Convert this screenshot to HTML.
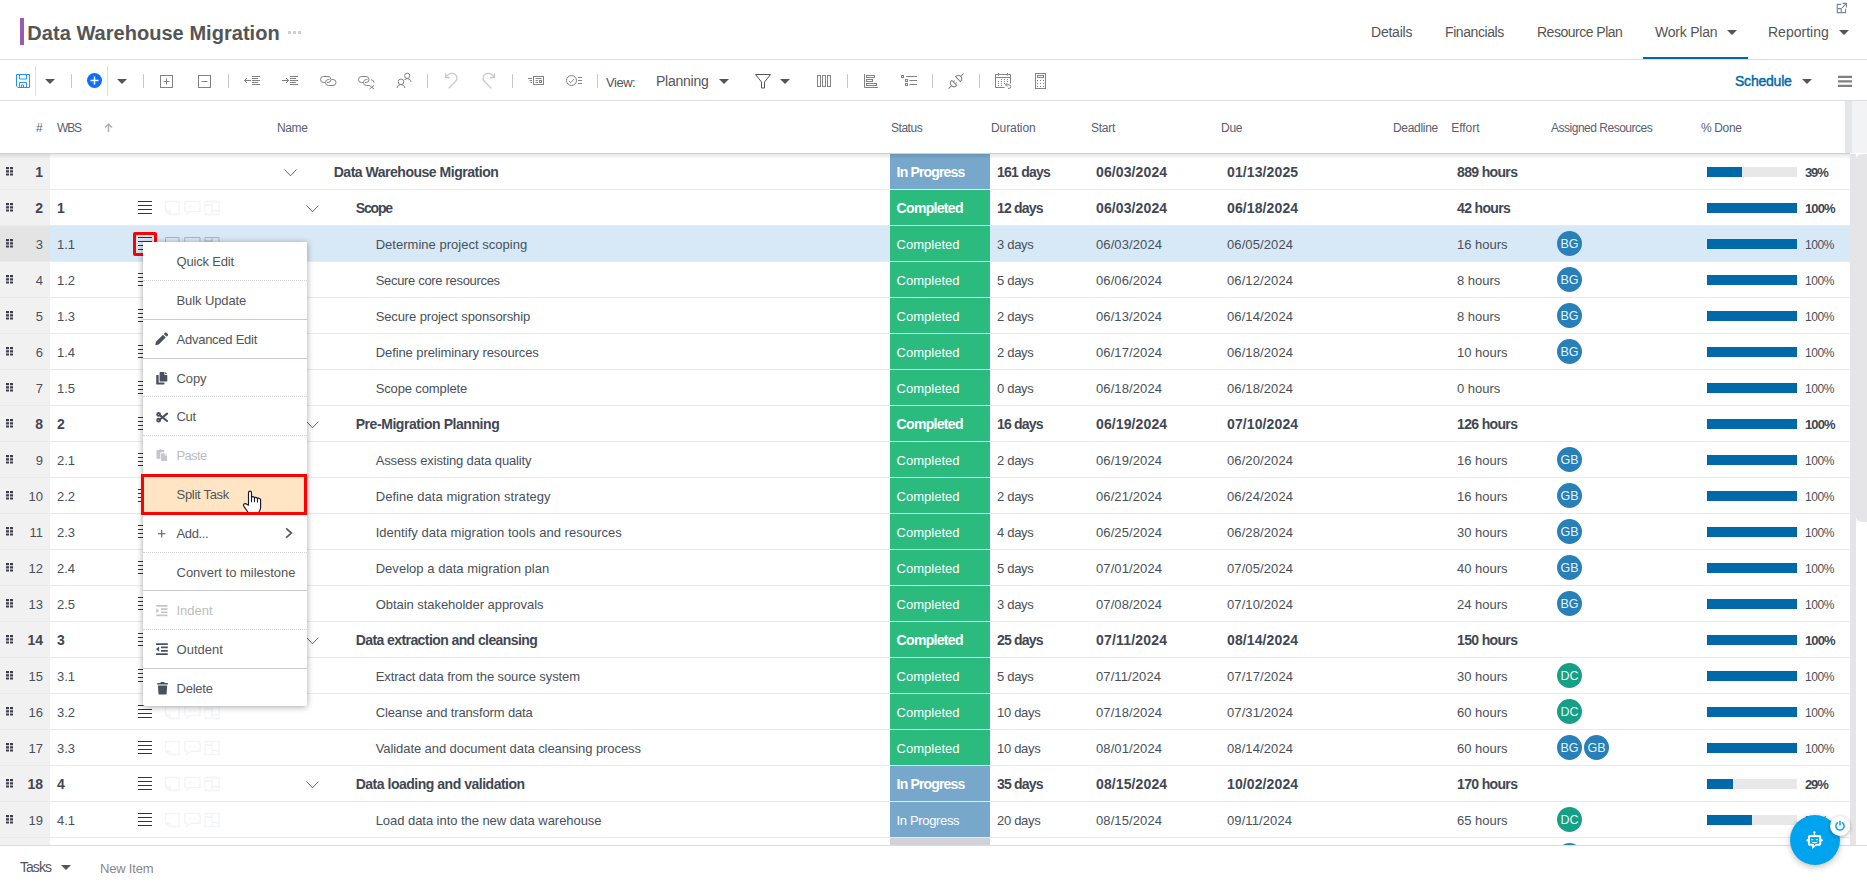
<!DOCTYPE html>
<html><head><meta charset="utf-8"><title>Data Warehouse Migration</title>
<style>
*{box-sizing:border-box;margin:0;padding:0}
html,body{width:1867px;height:892px;overflow:hidden;background:#fff;font-family:"Liberation Sans",sans-serif;color:#444}
body{position:relative}
.abs{position:absolute}
svg{position:absolute;overflow:visible}
/* header */
#pbar{position:absolute;left:20px;top:18px;width:4px;height:27px;background:#9b59b6}
#title{position:absolute;left:27.300px;top:20px;font-size:20px;font-weight:bold;color:#555;line-height:26px;white-space:nowrap}
#dots{position:absolute;left:288px;top:31px;width:13px;height:3px;background:linear-gradient(90deg,#cfcfcf 0,#cfcfcf 3px,#fff 3px,#fff 5px,#cfcfcf 5px,#cfcfcf 8px,#fff 8px,#fff 10px,#cfcfcf 10px,#cfcfcf 13px)}
.tab{position:absolute;top:23px;font-size:14px;line-height:18px;color:#555;white-space:nowrap}
.arr{position:absolute;width:0;height:0;border-left:5px solid transparent;border-right:5px solid transparent;border-top:5.500px solid #555}
#uline{position:absolute;left:1643px;top:56.600px;width:105px;height:2.400px;background:#0067a8}
.hl{position:absolute;left:0;width:1867px;height:1px;background:#dddde2}
/* toolbar */
.vs{position:absolute;top:66px;width:1px;height:30px;background:#dedede}
.ss{position:absolute;top:74px;width:1px;height:14px;background:#c8c8c8}
.tb{stroke:#838383;fill:none;stroke-width:1}
.tl{position:absolute;font-size:14px;line-height:18px;color:#555;white-space:nowrap}
/* grid header */
.gh{position:absolute;top:121px;font-size:12px;line-height:14px;color:#596070;white-space:nowrap}
/* rows */
.row{position:absolute;left:0;width:1850px;height:36px;border-bottom:1px solid #e8eaec;background:#fff}
.row .lc{position:absolute;left:0;top:0;width:50px;height:35px;background:#f1f1f1}
.row.sel{background:#d7e8f6}
.row.sel .lc{background:#e4e4e4}
.row .t{position:absolute;top:11px;font-size:13px;line-height:16px;white-space:nowrap;color:#49505a}
.row.b .t{font-weight:bold;color:#414753;font-size:14px;top:10px}
.num{position:absolute;right:1807px;top:11px;font-size:13px;line-height:16px;color:#49505a}
.wbs{position:absolute;left:57px;top:11px;font-size:13px;line-height:16px;color:#49505a}
.row.b .num,.row.b .wbs{font-weight:bold;color:#414753;font-size:14px;top:10px}
.drag{left:6px;top:13px;width:7px;height:9px;fill:#3a3f4a}
.ham{left:138px;top:10px;width:14px;height:14px;stroke:#333;stroke-width:1;fill:none}
.ghost{left:165px;top:11px;width:56px;height:15px;stroke:#f2f4f7;stroke-width:1.300;fill:none}
.row.sel .ghost{stroke:#b0b3b8;stroke-width:1}
.chev{top:15px;width:13px;height:7.500px;stroke:#666;stroke-width:1;fill:none}
.st{position:absolute;left:890px;top:0;width:100px;height:35px;color:#fff;font-size:13px;line-height:16px;padding:11px 0 0 6.600px;white-space:nowrap}
.st.c{background:#2cbb7e}
.st.p{background:#77a7ca;letter-spacing:-.35px}
.row.b .st{font-weight:bold;font-size:14px;padding-top:10px}
.av{position:absolute;top:5px;width:25px;height:25px;border-radius:50%;background:#2980b9;color:rgba(255,255,255,.93);font-size:12.500px;line-height:27.500px;text-align:center}
.av.g{background:#16a085}
.bar{position:absolute;left:1707px;top:13px;width:90px;height:10px;background:#e8e8e8}
.bar i{display:block;height:10px;background:#0069aa}
.row .t.pct{left:1805px;font-size:12px;letter-spacing:-.4px}.row.b .t.pct{font-size:13px;top:11px}

#menu{position:absolute;left:143px;top:242px;width:164px;height:463.500px;background:#fff;box-shadow:0 1px 6px rgba(0,0,0,.35);border-radius:0 0 2px 2px;z-index:10}
#menu .mt{position:absolute;left:33.500px;font-size:13px;line-height:16px;color:#555;white-space:nowrap}
#menu .mt.dis{color:#bdbdbd}
#menu .mic{fill:#4a5060}
#menu .mic.dis{fill:#c4c6cc}
#menu .sep{position:absolute;left:0;width:164px;height:0;border-top:1px solid #c9cad6}
#menu .sep.d{border-top:1px dotted #d4d4d4}
.row .dt{letter-spacing:.1px}.row .du{letter-spacing:-.3px}
/* bottom */
#bottom{position:absolute;left:0;top:845px;width:1867px;height:47px;background:#fff;border-top:1px solid #dcdcdc}
</style></head><body>
<!-- title -->
<div id="pbar"></div>
<div id="title" style="letter-spacing:0.037px;">Data Warehouse Migration</div>
<div id="dots"></div>
<!-- tabs -->
<span class="tab" style="letter-spacing:-0.228px;left:1371px">Details</span>
<span class="tab" style="letter-spacing:-0.413px;left:1445px">Financials</span>
<span class="tab" style="letter-spacing:-0.494px;left:1537px">Resource Plan</span>
<span class="tab" style="letter-spacing:-0.214px;left:1655px">Work Plan</span><i class="arr" style="left:1726.800px;top:29.700px"></i>
<span class="tab" style="letter-spacing:-0.000px;left:1768px">Reporting</span><i class="arr" style="left:1838.500px;top:29.700px"></i>
<div id="uline"></div>
<div class="hl" style="top:59px"></div>
<div class="hl" style="top:100px"></div>
<!-- toolbar -->
<svg style="left:0;top:60px;width:1867px;height:40px" viewBox="0 60 1867 40">
<!-- save -->
<g fill="none" stroke="#2196f3" stroke-width="1">
<path d="M16.5 74.5h13v13h-11.5l-1.5-1.5z"/>
<path d="M19.5 74.5v4.5h7v-4.5"/>
<path d="M19.5 87.5v-5h7v5M21.5 87.5v-2.5h2v2.5"/>
</g>
<!-- plus circle -->
<circle cx="94.5" cy="80.5" r="7.5" fill="#0d6efd"/>
<path d="M90.5 80.5h8M94.5 76.5v8" stroke="#fff" stroke-width="1.5" fill="none"/>
<g class="tb">
<!-- expand / collapse boxes -->
<rect x="160.5" y="75.5" width="12" height="12"/><path d="M163.5 81.5h6M166.5 78.5v6"/>
<rect x="198.5" y="75.5" width="12" height="12"/><path d="M201.5 81.5h6"/>
<!-- outdent -->
<path d="M252 76.5h8M252 78.5h6M252 80.5h8M252 82.5h6M252 84.5h8M244.5 80.5h6.5M247 78l-2.5 2.5l2.5 2.5"/>
<!-- indent -->
<path d="M290 76.5h8M290 78.5h6M290 80.5h8M290 82.5h6M290 84.5h8M282 80.5h6.5M286 78l2.5 2.5l-2.5 2.5"/>
<!-- link -->
<path d="M325 82.500H323.500A3 3 0 0 1 323.500 76.500H328A3 3 0 0 1 328 82.500H327"/>
<path d="M331.500 79.500H333A3 3 0 0 1 333 85.500H328.500A3 3 0 0 1 328.500 79.500H329.500"/>
<!-- unlink -->
<path d="M363 82.500H361.500A3 3 0 0 1 361.500 76.500H366A3 3 0 0 1 366 82.500H365"/>
<path d="M369.5 85.5h-3a3 3 0 0 1 0-6h1M371 79.8a3 3 0 0 1 3 2.7M369.5 85.5l4.5 3.5M374 85.5l-4.5 3.5"/>
<!-- people -->
<circle cx="407.2" cy="75.8" r="2.6"/><path d="M404.5 79.5q2.8-1.8 5.4 0q1 1 1.2 2.5"/>
<circle cx="401" cy="81.8" r="2.8"/><path d="M397 88q0.5-3.5 4-3.5t4 3.5"/>
<!-- task card icon -->
<path d="M528 78.5h4M529.5 80.5h2.5M530.5 82.5h1.5"/>
<rect x="533.5" y="76.5" width="10" height="8"/>
<path d="M535.5 78.5h6M535.5 80.5h2.5M535.5 82.5h2.5"/><rect x="539.5" y="80.5" width="2" height="2"/>
<!-- check circle list -->
<circle cx="571.5" cy="80.5" r="5"/><path d="M569 80.8l1.8 1.8l3.4-3.6M578 77.5h4M578 80.5h4M578 83.5h4"/>
<!-- filter -->
<path d="M755.5 74.5h15l-6 7.5v6h-3v-6z" stroke="#555"/>
<!-- columns -->
<rect x="817.5" y="75.5" width="3" height="11"/><rect x="822.5" y="75.5" width="3" height="11"/><rect x="827.5" y="75.5" width="3" height="11"/>
<!-- gantt -->
<path d="M864.5 74v13.5h13.500"/><rect x="866.5" y="75.500" width="8" height="2"/><rect x="866.5" y="79.500" width="6" height="2"/><rect x="866.5" y="83.500" width="10" height="2"/>
<!-- tree list -->
<rect x="901.5" y="75.5" width="2" height="2"/><path d="M906 76.500h11M909.500 80.500h7.500M909.500 84.500h7.500"/><rect x="905.5" y="79.500" width="2" height="2"/><rect x="905.5" y="83.500" width="2" height="2"/>
<!-- plug -->
<g transform="translate(956 80.500) rotate(-45)"><path d="M-11 .5H-6.800M6.200 .4H10.500"/><path d="M-2.900 -3H-3.300A3.500 3.500 0 0 0 -3.300 4H-2.900Z"/><path d="M-2.900 -.9H-.9M-2.900 1.900H-.9"/><path d="M2.400 -3H2.800A3.400 3.400 0 0 1 2.800 3.800H2.400Z"/></g>
<!-- calendar -->
<path d="M1004.500 87.500H995.500V74.500H1010.500V83.500M995.500 77.500H1010.500M998.500 73V75.500M1007.500 73V75.500"/>
<path d="M1001 79.500h1M1004 79.500h1M1007 79.500h1M998 81.500h1M1001 81.500h1M1004 81.500h1M1007 81.500h1M998 83.500h1M1001 83.500h1M1004 83.500h1M998 85.500h1M1001 85.500h1"/>
<path d="M1005.500 84.800H1009A1.800 1.800 0 0 1 1009 88.400H1008M1007.300 83l-1.800 1.800l1.800 1.800"/>
<!-- calculator -->
<rect x="1035.500" y="73.500" width="10" height="15"/><rect x="1037.500" y="75.500" width="6" height="2"/>
<path d="M1037 80.500h1M1040 80.500h1M1043 80.500h1M1037 83.500h1M1040 83.500h1M1043 83.500h1M1037 86.500h1M1040 86.500h1M1043 86.500h1"/>
</g>
<!-- undo/redo (disabled) -->
<g fill="none" stroke="#c9c9c9" stroke-width="1.300">
<path d="M445.500 73.300v4.200h4.300M445.500 77.500q2.500-4.500 7-4.200q4.500 1 4.500 5q-0.500 2.500-2.500 4.200l-5.800 5.800"/>
<path d="M494.500 73.300v4.200h-4.300M494.500 77.500q-2.500-4.500-7-4.200q-4.500 1-4.500 5q0.500 2.500 2.500 4.200l5.800 5.800"/>
</g>
<!-- hamburger right -->
<path d="M1838 76.900h14M1838 81.300h14M1838 85.800h14" stroke="#808080" stroke-width="2.200" fill="none"/>
</svg>
<i class="vs" style="left:35px"></i><i class="vs" style="left:107px"></i>
<i class="ss" style="left:71px"></i><i class="ss" style="left:143px"></i><i class="ss" style="left:228px"></i><i class="ss" style="left:427px"></i><i class="ss" style="left:512px"></i><i class="ss" style="left:597px"></i><i class="ss" style="left:847px"></i><i class="ss" style="left:932px"></i><i class="ss" style="left:979px"></i>
<i class="arr" style="left:44.800px;top:79px"></i>
<i class="arr" style="left:116.700px;top:79px"></i>
<i class="arr" style="left:719.300px;top:79px"></i>
<i class="arr" style="left:780.400px;top:79px"></i>
<i class="arr" style="left:1801.600px;top:79px"></i>
<span class="tl" style="letter-spacing:-0.473px;left:606px;top:74px;font-size:13px">View:</span>
<span class="tl" style="letter-spacing:-0.250px;left:656px;top:72px">Planning</span>
<span class="tl" style="letter-spacing:-0.224px;left:1735px;top:72px;color:#0067a8;-webkit-text-stroke:0.400px #0067a8;font-size:14px">Schedule</span>

<!-- grid header -->
<div class="abs" style="left:0;top:101px;width:1845px;height:52px;background:#fff"></div>
<div class="abs" style="left:1845px;top:101px;width:7px;height:52px;background:#e5e6e8"></div>
<div class="abs" style="left:1852px;top:101px;width:15px;height:52px;background:#f2f3f5"></div>
<span class="gh" style="left:36px">#</span>
<span class="gh" style="letter-spacing:-1.181px;left:57px">WBS</span>
<svg style="left:104px;top:123px;width:9px;height:9px" viewBox="0 0 9 9"><path d="M4.500 9v-8M1 4.500l3.500-3.500l3.500 3.500" fill="none" stroke="#b0b0b0" stroke-width="1.500"/></svg>
<span class="gh" style="letter-spacing:-0.379px;left:277px">Name</span>
<span class="gh" style="letter-spacing:-0.472px;left:891px">Status</span>
<span class="gh" style="letter-spacing:-0.095px;left:991px">Duration</span>
<span class="gh" style="letter-spacing:-0.269px;left:1091px">Start</span>
<span class="gh" style="letter-spacing:-0.272px;left:1221px">Due</span>
<span class="gh" style="letter-spacing:-0.309px;left:1393px">Deadline</span>
<span class="gh" style="letter-spacing:-0.045px;left:1451.300px">Effort</span>
<span class="gh" style="letter-spacing:-0.492px;left:1551px">Assigned Resources</span>
<span class="gh" style="letter-spacing:-0.367px;left:1701px">% Done</span>
<div class="abs" style="left:0;top:153px;width:1850px;height:1px;background:#cfcfcf;z-index:3"></div>
<div class="abs" style="left:0;top:154px;width:1850px;height:5px;background:linear-gradient(rgba(0,0,0,.10),rgba(0,0,0,0));z-index:3"></div>

<div id="grid">
<div class="row b" style="top:154px"><div class="lc"></div><svg class="drag" viewBox="0 0 7 9"><path d="M0 0h3v2.200H0zM4 0h3v2.200H4zM0 3.200h3v2.200H0zM4 3.200h3v2.200H4zM0 6.400h3v2.200H0zM4 6.400h3v2.200H4z"/></svg><span class="num">1</span><svg class="chev" style="left:284px" viewBox="0 0 13 7.500"><path d="M0.500 0.500l6 6.300l6-6.300"/></svg><span class="t name" style="letter-spacing:-0.478px;left:333.7px">Data Warehouse Migration</span><div class="st p"><span style="letter-spacing:-0.831px;display:inline-block">In Progress</span></div><span class="t du" style="letter-spacing:-0.758px;left:997px">161 days</span><span class="t dt" style="letter-spacing:0.112px;left:1096px">06/03/2024</span><span class="t dt" style="letter-spacing:0.112px;left:1227px">01/13/2025</span><span class="t" style="letter-spacing:-0.649px;left:1457px">889 hours</span><div class="bar"><i style="width:35px"></i></div><span class="t pct" style="letter-spacing:-1.143px;">39%</span></div>
<div class="row b" style="top:190px"><div class="lc"></div><svg class="drag" viewBox="0 0 7 9"><path d="M0 0h3v2.200H0zM4 0h3v2.200H4zM0 3.200h3v2.200H0zM4 3.200h3v2.200H4zM0 6.400h3v2.200H0zM4 6.400h3v2.200H4z"/></svg><span class="num">2</span><span class="wbs">1</span><svg class="ham" viewBox="0 0 14 14"><path d="M0 1.5h14M0 5.5h14M0 9.5h14M0 13.5h14"/></svg><svg class="ghost" viewBox="0 0 56 15"><path d="M0.5 0.5h13.500v13h-9l-4.500-3.500zM0.500 10h4.500v3.500M19.700 0.500h15.300v9.800h-9.500l-3.500 3.200v-3.200h-2.300zM24.500 5.500h2M28.500 5.500h2M40 0.500h14v13h-14zM47 0.500v13M40 4h7M47 9.700h7"/></svg><svg class="chev" style="left:306px" viewBox="0 0 13 7.500"><path d="M0.500 0.500l6 6.300l6-6.300"/></svg><span class="t name" style="letter-spacing:-1.143px;left:355.7px">Scope</span><div class="st c"><span style="letter-spacing:-0.683px;display:inline-block">Completed</span></div><span class="t du" style="letter-spacing:-0.826px;left:997px">12 days</span><span class="t dt" style="letter-spacing:0.112px;left:1096px">06/03/2024</span><span class="t dt" style="letter-spacing:0.112px;left:1227px">06/18/2024</span><span class="t" style="letter-spacing:-0.657px;left:1457px">42 hours</span><div class="bar"><i style="width:90px"></i></div><span class="t pct" style="letter-spacing:-0.864px;">100%</span></div>
<div class="row sel" style="top:226px"><div class="lc"></div><svg class="drag" viewBox="0 0 7 9"><path d="M0 0h3v2.200H0zM4 0h3v2.200H4zM0 3.200h3v2.200H0zM4 3.200h3v2.200H4zM0 6.400h3v2.200H0zM4 6.400h3v2.200H4z"/></svg><span class="num">3</span><span class="wbs">1.1</span><svg class="ham" viewBox="0 0 14 14"><path d="M0 1.5h14M0 5.5h14M0 9.5h14M0 13.5h14"/></svg><svg class="ghost" viewBox="0 0 56 15"><path d="M0.5 0.5h13.500v13h-9l-4.500-3.500zM0.500 10h4.500v3.500M19.700 0.500h15.300v9.800h-9.500l-3.500 3.200v-3.200h-2.300zM24.500 5.500h2M28.500 5.500h2M40 0.500h14v13h-14zM47 0.500v13M40 4h7M47 9.700h7"/></svg><span class="t name" style="letter-spacing:0.023px;left:375.7px">Determine project scoping</span><div class="st c"><span style="display:inline-block">Completed</span></div><span class="t du" style="left:997px">3 days</span><span class="t dt" style="left:1096px">06/03/2024</span><span class="t dt" style="left:1227px">06/05/2024</span><span class="t" style="left:1457px">16 hours</span><span class="av" style="left:1557px">BG</span><div class="bar"><i style="width:90px"></i></div><span class="t pct" style="">100%</span></div>
<div class="row" style="top:262px"><div class="lc"></div><svg class="drag" viewBox="0 0 7 9"><path d="M0 0h3v2.200H0zM4 0h3v2.200H4zM0 3.200h3v2.200H0zM4 3.200h3v2.200H4zM0 6.400h3v2.200H0zM4 6.400h3v2.200H4z"/></svg><span class="num">4</span><span class="wbs">1.2</span><svg class="ham" viewBox="0 0 14 14"><path d="M0 1.5h14M0 5.5h14M0 9.5h14M0 13.5h14"/></svg><svg class="ghost" viewBox="0 0 56 15"><path d="M0.5 0.5h13.500v13h-9l-4.500-3.500zM0.500 10h4.500v3.500M19.700 0.500h15.300v9.800h-9.500l-3.500 3.200v-3.200h-2.300zM24.500 5.500h2M28.500 5.500h2M40 0.500h14v13h-14zM47 0.500v13M40 4h7M47 9.700h7"/></svg><span class="t name" style="letter-spacing:-0.318px;left:375.7px">Secure core resources</span><div class="st c"><span style="display:inline-block">Completed</span></div><span class="t du" style="left:997px">5 days</span><span class="t dt" style="left:1096px">06/06/2024</span><span class="t dt" style="left:1227px">06/12/2024</span><span class="t" style="left:1457px">8 hours</span><span class="av" style="left:1557px">BG</span><div class="bar"><i style="width:90px"></i></div><span class="t pct" style="">100%</span></div>
<div class="row" style="top:298px"><div class="lc"></div><svg class="drag" viewBox="0 0 7 9"><path d="M0 0h3v2.200H0zM4 0h3v2.200H4zM0 3.200h3v2.200H0zM4 3.200h3v2.200H4zM0 6.400h3v2.200H0zM4 6.400h3v2.200H4z"/></svg><span class="num">5</span><span class="wbs">1.3</span><svg class="ham" viewBox="0 0 14 14"><path d="M0 1.5h14M0 5.5h14M0 9.5h14M0 13.5h14"/></svg><svg class="ghost" viewBox="0 0 56 15"><path d="M0.5 0.5h13.500v13h-9l-4.500-3.500zM0.500 10h4.500v3.500M19.700 0.500h15.300v9.800h-9.500l-3.500 3.200v-3.200h-2.300zM24.500 5.500h2M28.500 5.500h2M40 0.500h14v13h-14zM47 0.500v13M40 4h7M47 9.700h7"/></svg><span class="t name" style="letter-spacing:-0.120px;left:375.7px">Secure project sponsorship</span><div class="st c"><span style="display:inline-block">Completed</span></div><span class="t du" style="left:997px">2 days</span><span class="t dt" style="left:1096px">06/13/2024</span><span class="t dt" style="left:1227px">06/14/2024</span><span class="t" style="left:1457px">8 hours</span><span class="av" style="left:1557px">BG</span><div class="bar"><i style="width:90px"></i></div><span class="t pct" style="">100%</span></div>
<div class="row" style="top:334px"><div class="lc"></div><svg class="drag" viewBox="0 0 7 9"><path d="M0 0h3v2.200H0zM4 0h3v2.200H4zM0 3.200h3v2.200H0zM4 3.200h3v2.200H4zM0 6.400h3v2.200H0zM4 6.400h3v2.200H4z"/></svg><span class="num">6</span><span class="wbs">1.4</span><svg class="ham" viewBox="0 0 14 14"><path d="M0 1.5h14M0 5.5h14M0 9.5h14M0 13.5h14"/></svg><svg class="ghost" viewBox="0 0 56 15"><path d="M0.5 0.5h13.500v13h-9l-4.500-3.500zM0.500 10h4.500v3.500M19.700 0.500h15.300v9.800h-9.500l-3.500 3.200v-3.200h-2.300zM24.500 5.500h2M28.500 5.500h2M40 0.500h14v13h-14zM47 0.500v13M40 4h7M47 9.700h7"/></svg><span class="t name" style="letter-spacing:-0.084px;left:375.7px">Define preliminary resources</span><div class="st c"><span style="display:inline-block">Completed</span></div><span class="t du" style="left:997px">2 days</span><span class="t dt" style="left:1096px">06/17/2024</span><span class="t dt" style="left:1227px">06/18/2024</span><span class="t" style="left:1457px">10 hours</span><span class="av" style="left:1557px">BG</span><div class="bar"><i style="width:90px"></i></div><span class="t pct" style="">100%</span></div>
<div class="row" style="top:370px"><div class="lc"></div><svg class="drag" viewBox="0 0 7 9"><path d="M0 0h3v2.200H0zM4 0h3v2.200H4zM0 3.200h3v2.200H0zM4 3.200h3v2.200H4zM0 6.400h3v2.200H0zM4 6.400h3v2.200H4z"/></svg><span class="num">7</span><span class="wbs">1.5</span><svg class="ham" viewBox="0 0 14 14"><path d="M0 1.5h14M0 5.5h14M0 9.5h14M0 13.5h14"/></svg><svg class="ghost" viewBox="0 0 56 15"><path d="M0.5 0.5h13.500v13h-9l-4.500-3.500zM0.500 10h4.500v3.500M19.700 0.500h15.300v9.800h-9.500l-3.500 3.200v-3.200h-2.300zM24.500 5.500h2M28.500 5.500h2M40 0.500h14v13h-14zM47 0.500v13M40 4h7M47 9.700h7"/></svg><span class="t name" style="letter-spacing:-0.131px;left:375.7px">Scope complete</span><div class="st c"><span style="display:inline-block">Completed</span></div><span class="t du" style="left:997px">0 days</span><span class="t dt" style="left:1096px">06/18/2024</span><span class="t dt" style="left:1227px">06/18/2024</span><span class="t" style="left:1457px">0 hours</span><div class="bar"><i style="width:90px"></i></div><span class="t pct" style="">100%</span></div>
<div class="row b" style="top:406px"><div class="lc"></div><svg class="drag" viewBox="0 0 7 9"><path d="M0 0h3v2.200H0zM4 0h3v2.200H4zM0 3.200h3v2.200H0zM4 3.200h3v2.200H4zM0 6.400h3v2.200H0zM4 6.400h3v2.200H4z"/></svg><span class="num">8</span><span class="wbs">2</span><svg class="ham" viewBox="0 0 14 14"><path d="M0 1.5h14M0 5.5h14M0 9.5h14M0 13.5h14"/></svg><svg class="ghost" viewBox="0 0 56 15"><path d="M0.5 0.5h13.500v13h-9l-4.500-3.500zM0.500 10h4.500v3.500M19.700 0.500h15.300v9.800h-9.500l-3.500 3.200v-3.200h-2.300zM24.500 5.500h2M28.500 5.500h2M40 0.500h14v13h-14zM47 0.500v13M40 4h7M47 9.700h7"/></svg><svg class="chev" style="left:306px" viewBox="0 0 13 7.500"><path d="M0.500 0.500l6 6.300l6-6.300"/></svg><span class="t name" style="letter-spacing:-0.438px;left:355.7px">Pre-Migration Planning</span><div class="st c"><span style="letter-spacing:-0.683px;display:inline-block">Completed</span></div><span class="t du" style="letter-spacing:-0.826px;left:997px">16 days</span><span class="t dt" style="letter-spacing:0.112px;left:1096px">06/19/2024</span><span class="t dt" style="letter-spacing:0.112px;left:1227px">07/10/2024</span><span class="t" style="letter-spacing:-0.649px;left:1457px">126 hours</span><div class="bar"><i style="width:90px"></i></div><span class="t pct" style="letter-spacing:-0.864px;">100%</span></div>
<div class="row" style="top:442px"><div class="lc"></div><svg class="drag" viewBox="0 0 7 9"><path d="M0 0h3v2.200H0zM4 0h3v2.200H4zM0 3.200h3v2.200H0zM4 3.200h3v2.200H4zM0 6.400h3v2.200H0zM4 6.400h3v2.200H4z"/></svg><span class="num">9</span><span class="wbs">2.1</span><svg class="ham" viewBox="0 0 14 14"><path d="M0 1.5h14M0 5.5h14M0 9.5h14M0 13.5h14"/></svg><svg class="ghost" viewBox="0 0 56 15"><path d="M0.5 0.5h13.500v13h-9l-4.500-3.500zM0.500 10h4.500v3.500M19.700 0.500h15.300v9.800h-9.500l-3.500 3.200v-3.200h-2.300zM24.500 5.500h2M28.500 5.500h2M40 0.500h14v13h-14zM47 0.500v13M40 4h7M47 9.700h7"/></svg><span class="t name" style="letter-spacing:-0.143px;left:375.7px">Assess existing data quality</span><div class="st c"><span style="display:inline-block">Completed</span></div><span class="t du" style="left:997px">2 days</span><span class="t dt" style="left:1096px">06/19/2024</span><span class="t dt" style="left:1227px">06/20/2024</span><span class="t" style="left:1457px">16 hours</span><span class="av" style="left:1557px">GB</span><div class="bar"><i style="width:90px"></i></div><span class="t pct" style="">100%</span></div>
<div class="row" style="top:478px"><div class="lc"></div><svg class="drag" viewBox="0 0 7 9"><path d="M0 0h3v2.200H0zM4 0h3v2.200H4zM0 3.200h3v2.200H0zM4 3.200h3v2.200H4zM0 6.400h3v2.200H0zM4 6.400h3v2.200H4z"/></svg><span class="num">10</span><span class="wbs">2.2</span><svg class="ham" viewBox="0 0 14 14"><path d="M0 1.5h14M0 5.5h14M0 9.5h14M0 13.5h14"/></svg><svg class="ghost" viewBox="0 0 56 15"><path d="M0.5 0.5h13.500v13h-9l-4.500-3.500zM0.500 10h4.500v3.500M19.700 0.500h15.300v9.800h-9.500l-3.500 3.200v-3.200h-2.300zM24.500 5.500h2M28.500 5.500h2M40 0.500h14v13h-14zM47 0.500v13M40 4h7M47 9.700h7"/></svg><span class="t name" style="letter-spacing:0.052px;left:375.7px">Define data migration strategy</span><div class="st c"><span style="display:inline-block">Completed</span></div><span class="t du" style="left:997px">2 days</span><span class="t dt" style="left:1096px">06/21/2024</span><span class="t dt" style="left:1227px">06/24/2024</span><span class="t" style="left:1457px">16 hours</span><span class="av" style="left:1557px">GB</span><div class="bar"><i style="width:90px"></i></div><span class="t pct" style="">100%</span></div>
<div class="row" style="top:514px"><div class="lc"></div><svg class="drag" viewBox="0 0 7 9"><path d="M0 0h3v2.200H0zM4 0h3v2.200H4zM0 3.200h3v2.200H0zM4 3.200h3v2.200H4zM0 6.400h3v2.200H0zM4 6.400h3v2.200H4z"/></svg><span class="num">11</span><span class="wbs">2.3</span><svg class="ham" viewBox="0 0 14 14"><path d="M0 1.5h14M0 5.5h14M0 9.5h14M0 13.5h14"/></svg><svg class="ghost" viewBox="0 0 56 15"><path d="M0.5 0.5h13.500v13h-9l-4.500-3.500zM0.500 10h4.500v3.500M19.700 0.500h15.300v9.800h-9.500l-3.500 3.200v-3.200h-2.300zM24.500 5.500h2M28.500 5.500h2M40 0.500h14v13h-14zM47 0.500v13M40 4h7M47 9.700h7"/></svg><span class="t name" style="letter-spacing:0.029px;left:375.7px">Identify data migration tools and resources</span><div class="st c"><span style="display:inline-block">Completed</span></div><span class="t du" style="left:997px">4 days</span><span class="t dt" style="left:1096px">06/25/2024</span><span class="t dt" style="left:1227px">06/28/2024</span><span class="t" style="left:1457px">30 hours</span><span class="av" style="left:1557px">GB</span><div class="bar"><i style="width:90px"></i></div><span class="t pct" style="">100%</span></div>
<div class="row" style="top:550px"><div class="lc"></div><svg class="drag" viewBox="0 0 7 9"><path d="M0 0h3v2.200H0zM4 0h3v2.200H4zM0 3.200h3v2.200H0zM4 3.200h3v2.200H4zM0 6.400h3v2.200H0zM4 6.400h3v2.200H4z"/></svg><span class="num">12</span><span class="wbs">2.4</span><svg class="ham" viewBox="0 0 14 14"><path d="M0 1.5h14M0 5.5h14M0 9.5h14M0 13.5h14"/></svg><svg class="ghost" viewBox="0 0 56 15"><path d="M0.5 0.5h13.500v13h-9l-4.500-3.500zM0.500 10h4.500v3.500M19.700 0.500h15.300v9.800h-9.500l-3.500 3.200v-3.200h-2.300zM24.500 5.500h2M28.500 5.500h2M40 0.500h14v13h-14zM47 0.500v13M40 4h7M47 9.700h7"/></svg><span class="t name" style="letter-spacing:0.030px;left:375.7px">Develop a data migration plan</span><div class="st c"><span style="display:inline-block">Completed</span></div><span class="t du" style="left:997px">5 days</span><span class="t dt" style="left:1096px">07/01/2024</span><span class="t dt" style="left:1227px">07/05/2024</span><span class="t" style="left:1457px">40 hours</span><span class="av" style="left:1557px">GB</span><div class="bar"><i style="width:90px"></i></div><span class="t pct" style="">100%</span></div>
<div class="row" style="top:586px"><div class="lc"></div><svg class="drag" viewBox="0 0 7 9"><path d="M0 0h3v2.200H0zM4 0h3v2.200H4zM0 3.200h3v2.200H0zM4 3.200h3v2.200H4zM0 6.400h3v2.200H0zM4 6.400h3v2.200H4z"/></svg><span class="num">13</span><span class="wbs">2.5</span><svg class="ham" viewBox="0 0 14 14"><path d="M0 1.5h14M0 5.5h14M0 9.5h14M0 13.5h14"/></svg><svg class="ghost" viewBox="0 0 56 15"><path d="M0.5 0.5h13.500v13h-9l-4.500-3.500zM0.500 10h4.500v3.500M19.700 0.500h15.300v9.800h-9.500l-3.500 3.200v-3.200h-2.300zM24.500 5.500h2M28.500 5.500h2M40 0.500h14v13h-14zM47 0.500v13M40 4h7M47 9.700h7"/></svg><span class="t name" style="letter-spacing:-0.047px;left:375.7px">Obtain stakeholder approvals</span><div class="st c"><span style="display:inline-block">Completed</span></div><span class="t du" style="left:997px">3 days</span><span class="t dt" style="left:1096px">07/08/2024</span><span class="t dt" style="left:1227px">07/10/2024</span><span class="t" style="left:1457px">24 hours</span><span class="av" style="left:1557px">BG</span><div class="bar"><i style="width:90px"></i></div><span class="t pct" style="">100%</span></div>
<div class="row b" style="top:622px"><div class="lc"></div><svg class="drag" viewBox="0 0 7 9"><path d="M0 0h3v2.200H0zM4 0h3v2.200H4zM0 3.200h3v2.200H0zM4 3.200h3v2.200H4zM0 6.400h3v2.200H0zM4 6.400h3v2.200H4z"/></svg><span class="num">14</span><span class="wbs">3</span><svg class="ham" viewBox="0 0 14 14"><path d="M0 1.5h14M0 5.5h14M0 9.5h14M0 13.5h14"/></svg><svg class="ghost" viewBox="0 0 56 15"><path d="M0.5 0.5h13.500v13h-9l-4.500-3.500zM0.500 10h4.500v3.500M19.700 0.500h15.300v9.800h-9.500l-3.500 3.200v-3.200h-2.300zM24.500 5.500h2M28.500 5.500h2M40 0.500h14v13h-14zM47 0.500v13M40 4h7M47 9.700h7"/></svg><svg class="chev" style="left:306px" viewBox="0 0 13 7.500"><path d="M0.500 0.500l6 6.300l6-6.300"/></svg><span class="t name" style="letter-spacing:-0.580px;left:355.7px">Data extraction and cleansing</span><div class="st c"><span style="letter-spacing:-0.683px;display:inline-block">Completed</span></div><span class="t du" style="letter-spacing:-0.826px;left:997px">25 days</span><span class="t dt" style="letter-spacing:0.190px;left:1096px">07/11/2024</span><span class="t dt" style="letter-spacing:0.112px;left:1227px">08/14/2024</span><span class="t" style="letter-spacing:-0.649px;left:1457px">150 hours</span><div class="bar"><i style="width:90px"></i></div><span class="t pct" style="letter-spacing:-0.864px;">100%</span></div>
<div class="row" style="top:658px"><div class="lc"></div><svg class="drag" viewBox="0 0 7 9"><path d="M0 0h3v2.200H0zM4 0h3v2.200H4zM0 3.200h3v2.200H0zM4 3.200h3v2.200H4zM0 6.400h3v2.200H0zM4 6.400h3v2.200H4z"/></svg><span class="num">15</span><span class="wbs">3.1</span><svg class="ham" viewBox="0 0 14 14"><path d="M0 1.5h14M0 5.5h14M0 9.5h14M0 13.5h14"/></svg><svg class="ghost" viewBox="0 0 56 15"><path d="M0.5 0.5h13.500v13h-9l-4.500-3.500zM0.500 10h4.500v3.500M19.700 0.500h15.300v9.800h-9.500l-3.500 3.200v-3.200h-2.300zM24.500 5.500h2M28.500 5.500h2M40 0.500h14v13h-14zM47 0.500v13M40 4h7M47 9.700h7"/></svg><span class="t name" style="letter-spacing:-0.111px;left:375.7px">Extract data from the source system</span><div class="st c"><span style="display:inline-block">Completed</span></div><span class="t du" style="left:997px">5 days</span><span class="t dt" style="left:1096px">07/11/2024</span><span class="t dt" style="left:1227px">07/17/2024</span><span class="t" style="left:1457px">30 hours</span><span class="av g" style="left:1557px">DC</span><div class="bar"><i style="width:90px"></i></div><span class="t pct" style="">100%</span></div>
<div class="row" style="top:694px"><div class="lc"></div><svg class="drag" viewBox="0 0 7 9"><path d="M0 0h3v2.200H0zM4 0h3v2.200H4zM0 3.200h3v2.200H0zM4 3.200h3v2.200H4zM0 6.400h3v2.200H0zM4 6.400h3v2.200H4z"/></svg><span class="num">16</span><span class="wbs">3.2</span><svg class="ham" viewBox="0 0 14 14"><path d="M0 1.5h14M0 5.5h14M0 9.5h14M0 13.5h14"/></svg><svg class="ghost" viewBox="0 0 56 15"><path d="M0.5 0.5h13.500v13h-9l-4.500-3.500zM0.500 10h4.500v3.500M19.700 0.500h15.300v9.800h-9.500l-3.500 3.200v-3.200h-2.300zM24.500 5.500h2M28.500 5.500h2M40 0.500h14v13h-14zM47 0.500v13M40 4h7M47 9.700h7"/></svg><span class="t name" style="letter-spacing:-0.132px;left:375.7px">Cleanse and transform data</span><div class="st c"><span style="display:inline-block">Completed</span></div><span class="t du" style="left:997px">10 days</span><span class="t dt" style="left:1096px">07/18/2024</span><span class="t dt" style="left:1227px">07/31/2024</span><span class="t" style="left:1457px">60 hours</span><span class="av g" style="left:1557px">DC</span><div class="bar"><i style="width:90px"></i></div><span class="t pct" style="">100%</span></div>
<div class="row" style="top:730px"><div class="lc"></div><svg class="drag" viewBox="0 0 7 9"><path d="M0 0h3v2.200H0zM4 0h3v2.200H4zM0 3.200h3v2.200H0zM4 3.200h3v2.200H4zM0 6.400h3v2.200H0zM4 6.400h3v2.200H4z"/></svg><span class="num">17</span><span class="wbs">3.3</span><svg class="ham" viewBox="0 0 14 14"><path d="M0 1.5h14M0 5.5h14M0 9.5h14M0 13.5h14"/></svg><svg class="ghost" viewBox="0 0 56 15"><path d="M0.5 0.5h13.500v13h-9l-4.500-3.500zM0.500 10h4.500v3.500M19.700 0.500h15.300v9.800h-9.500l-3.500 3.200v-3.200h-2.300zM24.500 5.500h2M28.500 5.500h2M40 0.500h14v13h-14zM47 0.500v13M40 4h7M47 9.700h7"/></svg><span class="t name" style="letter-spacing:-0.077px;left:375.7px">Validate and document data cleansing process</span><div class="st c"><span style="display:inline-block">Completed</span></div><span class="t du" style="left:997px">10 days</span><span class="t dt" style="left:1096px">08/01/2024</span><span class="t dt" style="left:1227px">08/14/2024</span><span class="t" style="left:1457px">60 hours</span><span class="av" style="left:1557px">BG</span><span class="av" style="left:1584px">GB</span><div class="bar"><i style="width:90px"></i></div><span class="t pct" style="">100%</span></div>
<div class="row b" style="top:766px"><div class="lc"></div><svg class="drag" viewBox="0 0 7 9"><path d="M0 0h3v2.200H0zM4 0h3v2.200H4zM0 3.200h3v2.200H0zM4 3.200h3v2.200H4zM0 6.400h3v2.200H0zM4 6.400h3v2.200H4z"/></svg><span class="num">18</span><span class="wbs">4</span><svg class="ham" viewBox="0 0 14 14"><path d="M0 1.5h14M0 5.5h14M0 9.5h14M0 13.5h14"/></svg><svg class="ghost" viewBox="0 0 56 15"><path d="M0.5 0.5h13.500v13h-9l-4.500-3.500zM0.500 10h4.500v3.500M19.700 0.500h15.300v9.800h-9.500l-3.500 3.200v-3.200h-2.300zM24.500 5.500h2M28.500 5.500h2M40 0.500h14v13h-14zM47 0.500v13M40 4h7M47 9.700h7"/></svg><svg class="chev" style="left:306px" viewBox="0 0 13 7.500"><path d="M0.500 0.500l6 6.300l6-6.300"/></svg><span class="t name" style="letter-spacing:-0.483px;left:355.7px">Data loading and validation</span><div class="st p"><span style="letter-spacing:-0.831px;display:inline-block">In Progress</span></div><span class="t du" style="letter-spacing:-0.826px;left:997px">35 days</span><span class="t dt" style="letter-spacing:0.112px;left:1096px">08/15/2024</span><span class="t dt" style="letter-spacing:0.112px;left:1227px">10/02/2024</span><span class="t" style="letter-spacing:-0.649px;left:1457px">170 hours</span><div class="bar"><i style="width:25.5px"></i></div><span class="t pct" style="letter-spacing:-1.143px;">29%</span></div>
<div class="row" style="top:802px"><div class="lc"></div><svg class="drag" viewBox="0 0 7 9"><path d="M0 0h3v2.200H0zM4 0h3v2.200H4zM0 3.200h3v2.200H0zM4 3.200h3v2.200H4zM0 6.400h3v2.200H0zM4 6.400h3v2.200H4z"/></svg><span class="num">19</span><span class="wbs">4.1</span><svg class="ham" viewBox="0 0 14 14"><path d="M0 1.5h14M0 5.5h14M0 9.5h14M0 13.5h14"/></svg><svg class="ghost" viewBox="0 0 56 15"><path d="M0.5 0.5h13.500v13h-9l-4.500-3.500zM0.500 10h4.500v3.500M19.700 0.500h15.300v9.800h-9.500l-3.500 3.200v-3.200h-2.300zM24.500 5.500h2M28.500 5.500h2M40 0.500h14v13h-14zM47 0.500v13M40 4h7M47 9.700h7"/></svg><span class="t name" style="letter-spacing:-0.051px;left:375.7px">Load data into the new data warehouse</span><div class="st p"><span style="display:inline-block">In Progress</span></div><span class="t du" style="left:997px">20 days</span><span class="t dt" style="left:1096px">08/15/2024</span><span class="t dt" style="left:1227px">09/11/2024</span><span class="t" style="left:1457px">65 hours</span><span class="av g" style="left:1557px">DC</span><div class="bar"><i style="width:45px"></i></div><span class="t pct" style="">50%</span></div>
</div>
<div class="abs" style="left:1850px;top:154px;width:6px;height:691px;background:#e5e5e7"></div>
<div class="abs" style="left:1856px;top:154px;width:14px;height:368px;background:#e5e5e7;border-radius:6px 0 0 6px / 5px 0 0 5px"></div>

<!-- red highlight on hamburger of row 3 -->
<div class="abs" style="left:133px;top:232px;width:24px;height:24px;border:3px solid #f00;border-radius:2px;z-index:5"></div>
<div id="menu">
<i class="sep d" style="top:38px"></i>
<i class="sep" style="top:77px"></i>
<i class="sep" style="top:115.5px"></i>
<i class="sep d" style="top:154px"></i>
<i class="sep d" style="top:193px"></i>
<i class="sep d" style="top:309.5px"></i>
<i class="sep" style="top:348px"></i>
<i class="sep d" style="top:387px"></i>
<i class="sep" style="top:426px"></i>
<div class="abs" style="left:-2px;top:232px;width:166px;height:41px;background:#ffe5c4"></div>
<span class="mt" style="letter-spacing:-0.185px;top:12px">Quick Edit</span>
<span class="mt" style="letter-spacing:-0.103px;top:51px">Bulk Update</span>
<span class="mt" style="letter-spacing:-0.250px;top:90px">Advanced Edit</span>
<svg class="mic" viewBox="0 0 14 14" style="left:12px;top:90.3px;width:13.5px;height:13.5px"><path d="M0.300 13.700l0.700-3.500l7.300-7.300l2.800 2.800l-7.300 7.300zM9.200 2l1.300-1.300q0.700-0.700 1.400 0l1.400 1.400q0.700 0.700 0 1.400l-1.300 1.300z"/></svg>
<span class="mt" style="letter-spacing:-0.090px;top:129px">Copy</span>
<svg class="mic" viewBox="0 0 12 13" style="left:13px;top:129.8px;width:12px;height:12.5px"><path d="M4 0h4.500v3h3v6.500q0 .5-.5.500h-7q-.5 0-.5-.5v-9q0-.5.500-.5zM9.300 0l2.200 2.200h-2.200zM0 3.500q0-.5.500-.5h2v7.800h6v1.700q0 .5-.5.500h-7.500q-.5 0-.5-.5z"/></svg>
<span class="mt" style="letter-spacing:-0.311px;top:167px">Cut</span>
<svg class="mic" viewBox="0 0 12 11" style="left:13px;top:170px;width:12px;height:10.6px"><g fill="none" stroke="#4a5060"><circle cx="2.500" cy="2.500" r="1.500" stroke-width="2"/><circle cx="2.500" cy="8.500" r="1.500" stroke-width="2"/><path d="M4 3.500l7.300 5.800M4 7.500l7.300-5.800" stroke-width="2.200" stroke-linecap="round"/></g></svg>
<span class="mt dis" style="letter-spacing:-0.650px;top:206px">Paste</span>
<svg class="mic dis" viewBox="0 0 12 13" style="left:13px;top:207.4px;width:12px;height:12px"><path d="M0.500 1h2.500q.2-1 1.200-1t1.200 1h2.500q.5 0 .5.500v2h-3.400q-.8 0-.8.800v6.200h-3.700q-.5 0-.5-.5v-8.500q0-.5.500-.5zM5.500 4.500h3.500v2.500h2.500v5.500q0 .5-.5.500h-5.500q-.5 0-.5-.5v-7.500q0-.5.500-.5zM9.800 4.600l1.700 1.700h-1.700z"/></svg>
<span class="mt" style="letter-spacing:-0.291px;top:245px">Split Task</span>
<span class="mt" style="letter-spacing:-0.361px;top:284px">Add...</span>
<svg class="mic" viewBox="0 0 8 8" style="left:15.2px;top:288px;width:7.5px;height:7.5px"><path d="M0 4h8M4 0v8" fill="none" stroke="#555" stroke-width="1.100"/></svg>
<span class="mt" style="letter-spacing:-0.012px;top:323px">Convert to milestone</span>
<span class="mt dis" style="letter-spacing:0.007px;top:361px">Indent</span>
<svg class="mic dis" viewBox="0 0 12 12" style="left:13px;top:362.5px;width:11.8px;height:11.3px"><path d="M0 0h12v1.800H0zM5 3.400h7v1.800H5zM5 6.800h7v1.800H5zM0 10.200h12v1.800H0zM0 3.300l3.200 2.700l-3.200 2.700z"/></svg>
<span class="mt" style="letter-spacing:0.019px;top:400px">Outdent</span>
<svg class="mic" viewBox="0 0 12 12" style="left:13px;top:400.8px;width:11.8px;height:12.2px"><path d="M0 0h12v1.800H0zM5 3.400h7v1.800H5zM5 6.800h7v1.800H5zM0 10.200h12v1.800H0zM3.200 3.300l-3.200 2.700l3.200 2.700z"/></svg>
<span class="mt" style="letter-spacing:-0.230px;top:439px">Delete</span>
<svg class="mic" viewBox="0 0 11 13" style="left:13.5px;top:439.8px;width:11.1px;height:12.6px"><path d="M0 1h3.300l.5-1h3.400l.5 1h3.300v1.500H0zM0.700 3.500h9.600l-.6 8.500q-.1 1-1 1h-6.400q-.9 0-1-1z"/></svg>
<svg viewBox="0 0 8 11" style="left:141.500px;top:286.400px;width:8px;height:10.500px"><path d="M1 0.500l5.500 4.750l-5.500 4.750" fill="none" stroke="#555" stroke-width="1.700"/></svg>
<svg viewBox="0 0 1 1" style="left:0;top:0;width:1px;height:1px"><g transform="translate(-143 -242)"><path d="M248.500 505.200V492.800Q248.500 491.100 250 491.100Q251.500 491.100 251.500 492.800V497.200Q253 496 254.500 497.600Q256 496.800 257.500 498.400Q259 497.400 260.600 499.400V507.500Q260.400 510 258.800 512.500H248.200L243.900 506.300Q243 504.600 244.400 503.800Q245.600 503.200 246.800 504.200Z" fill="#fff" stroke="#141a2e" stroke-width="1.150" stroke-linejoin="round"/><path d="M251.500 497v4.700M254.500 497.600v4.200M257.500 498.400v3.600" fill="none" stroke="#141a2e" stroke-width="1.100" stroke-linecap="round"/></g></svg>
<div class="abs" style="left:-2px;top:232px;width:166px;height:41px;border:3px solid #f00"></div>
</div>
<div id="bottom"></div>
<span class="tl" style="letter-spacing:-0.959px;left:20px;top:858px">Tasks</span><i class="arr" style="left:61px;top:865px"></i>
<span class="tl" style="letter-spacing:-0.188px;left:100px;top:860px;font-size:13px;color:#888">New Item</span>
<!-- partial row 20 -->
<div class="abs" style="left:0;top:838px;width:50px;height:7px;background:#f1f1f1"></div>
<div class="abs" style="left:890px;top:838px;width:100px;height:7px;background:#d2d2d8"></div>
<div class="abs" style="left:1557px;top:843px;width:25px;height:2px;overflow:hidden"><div style="width:25px;height:25px;border-radius:50%;background:#2980b9"></div></div>
<!-- chat bubble -->
<div class="abs" style="left:1790px;top:815px;width:50px;height:50px;border-radius:50%;background:#00a3ee;box-shadow:0 2px 6px rgba(0,0,0,.25);z-index:20"></div>
<svg viewBox="1800 828 30 24" style="left:1800px;top:828px;width:30px;height:24px;z-index:21"><g fill="#fff"><circle cx="1814.400" cy="832.300" r="1.150"/><rect x="1813.700" y="832.500" width="1.400" height="3"/><rect x="1807.900" y="834.900" width="13.300" height="10.900" rx="2"/><circle cx="1807.700" cy="840.200" r="1.250"/><circle cx="1821.500" cy="840.200" r="1.250"/><path d="M1811.800 845.300l.5 3.700l4.200-3.700z"/></g><rect x="1809.900" y="837.100" width="9.300" height="6.700" fill="#00a3ee"/><g fill="#fff"><rect x="1811.200" y="839.100" width="2.100" height="1.100" rx=".5"/><rect x="1815.700" y="839.100" width="2.100" height="1.100" rx=".5"/><path d="M1811.100 841.200q3.400 1.800 6.800 0q-.6 2-3.400 2.100q-2.800-.1-3.400-2.100z"/><path d="M1813.200 843.800h2.600l-1.300 1.600z" fill="#00a3ee"/></g></svg>
<div class="abs" style="left:1830px;top:816px;width:20px;height:20px;border-radius:50%;background:#fff;box-shadow:0 1px 4px rgba(0,0,0,.3);z-index:22"></div>
<svg viewBox="1834 820 12 12" style="left:1834px;top:820px;width:12px;height:12px;z-index:23"><path d="M1837.400 822.800a4.100 4.100 0 1 0 5.200 0" fill="none" stroke="#1aa6ea" stroke-width="1.600" stroke-linecap="round"/><path d="M1840 820.800v4.800" fill="none" stroke="#1aa6ea" stroke-width="1.600"/></svg>
<!-- top-right popout icon -->
<svg viewBox="0 0 12 12" style="left:1836px;top:3.200px;width:11.300px;height:10.500px"><path d="M5.500 1.500h-4.500v9.500h9.500v-4.500M1 6.500h4.500v4.500M7 0.500h4.500v4.500M11.500 0.500l-5 5" fill="none" stroke="#7d8596" stroke-width="1.300"/></svg>

</body></html>
